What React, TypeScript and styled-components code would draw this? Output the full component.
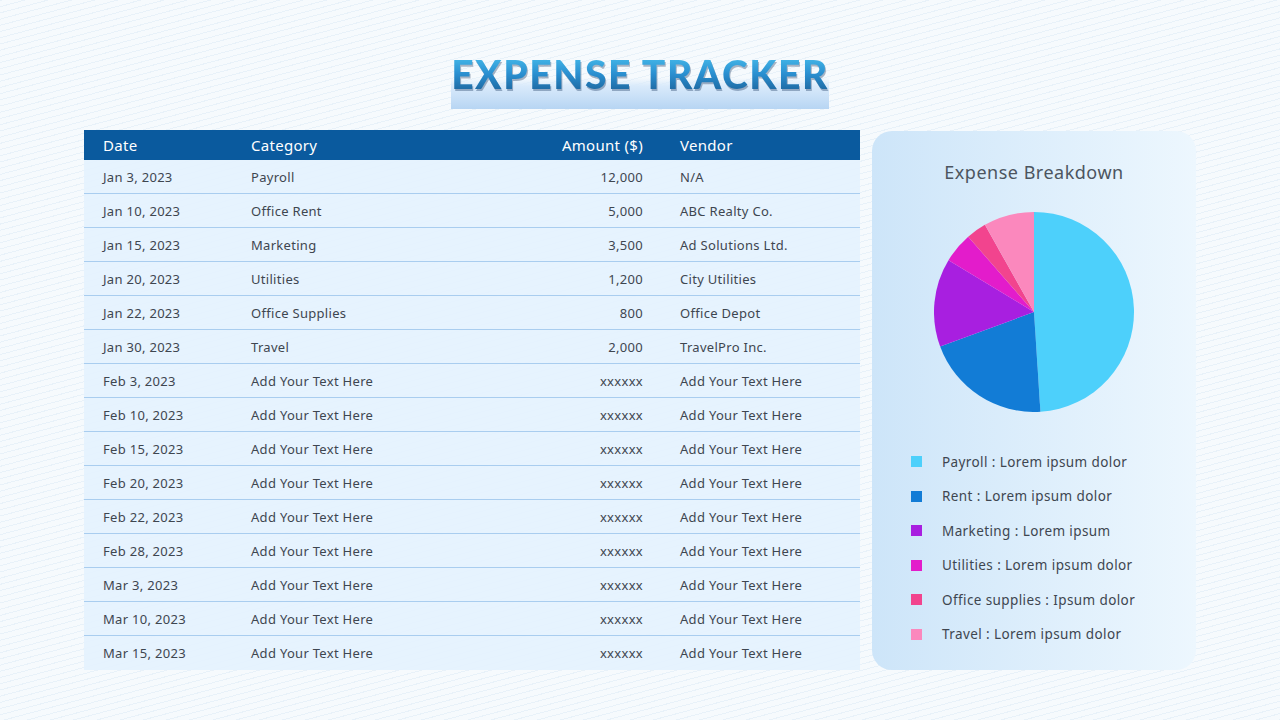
import React from "react";
import styled, { createGlobalStyle } from "styled-components";

const Global = createGlobalStyle`
  html, body { margin: 0; padding: 0; }
  body {
    width: 1280px; height: 720px; overflow: hidden;
    font-family: "Noto Sans", "Liberation Sans", sans-serif;
    background-color: #f6fafd;
    background-image: repeating-linear-gradient(165deg, rgba(200,222,240,0.3) 0 1px, transparent 1px 6px);
  }
`;

const Page = styled.div`
  width: 1280px; height: 720px; box-sizing: border-box;
  display: flex; flex-direction: column; align-items: center;
  padding-top: 52px;
`;

const TitleBox = styled.div`
  height: 57px; width: 378px; box-sizing: border-box;
  background: linear-gradient(180deg, transparent 0 45%, #d9eafb 60%, #b7d5f3 100%);
  display: flex; justify-content: center; align-items: flex-start;
`;

const Title = styled.h1`
  margin: 0; font-family: "Lato", "Liberation Sans", sans-serif; font-weight: 900;
  font-size: 39px; letter-spacing: 1.6px; line-height: 44px; white-space: nowrap;
  background: linear-gradient(180deg, #4cc3f0 0%, #2a8fd0 50%, #1a5d94 100%);
  -webkit-background-clip: text; background-clip: text; color: transparent;
  filter: drop-shadow(1px 2px 0 rgba(20,50,90,0.35));
`;

const Main = styled.div`
  margin-top: 21px; display: flex; gap: 12px; align-items: flex-start;
`;

const Table = styled.div`
  width: 776px; display: flex; flex-direction: column;
`;

const Row = styled.div<{ $head?: boolean }>`
  display: grid; grid-template-columns: 148px 220px 209px 1fr;
  height: ${p => (p.$head ? 30 : 34)}px; align-items: center;
  padding-left: 19px; box-sizing: border-box; white-space: nowrap;
  background: ${p => (p.$head ? "#0a5a9e" : "rgba(228,242,254,0.9)")};
  color: ${p => (p.$head ? "#fff" : "#3e4650")};
  font-size: ${p => (p.$head ? 15 : 13)}px;
  letter-spacing: 0.3px;
  border-bottom: ${p => (p.$head ? "none" : "1px solid #a9cdef")};
  &:last-child { border-bottom: none; }
`;

const Amt = styled.span`
  text-align: right; padding-right: 37px;
`;

const Card = styled.div`
  width: 324px; height: 539px; border-radius: 20px; margin-top: 1px;
  background: linear-gradient(90deg, #cde5f9, #edf7fe);
  display: flex; flex-direction: column; align-items: center; box-sizing: border-box;
  padding-top: 29px;
`;

const CardTitle = styled.div`
  font-size: 18px; color: #4c5560; letter-spacing: 0.5px;
`;

const PieSvg = styled.svg`
  margin-top: 28px;
`;

const Legend = styled.div`
  margin-top: 40px; align-self: flex-start; margin-left: 39px;
  display: flex; flex-direction: column; gap: 15.5px;
`;

const LegendItem = styled.div`
  display: flex; align-items: center; gap: 20px; font-size: 13.5px; color: #3e4650; height: 19px;
  letter-spacing: 0.4px;
`;

const Swatch = styled.span<{ $c: string }>`
  width: 11px; height: 11px; background: ${p => p.$c}; display: inline-block;
`;

const data = [
  ["Jan 3, 2023", "Payroll", "12,000", "N/A"],
  ["Jan 10, 2023", "Office Rent", "5,000", "ABC Realty Co."],
  ["Jan 15, 2023", "Marketing", "3,500", "Ad Solutions Ltd."],
  ["Jan 20, 2023", "Utilities", "1,200", "City Utilities"],
  ["Jan 22, 2023", "Office Supplies", "800", "Office Depot"],
  ["Jan 30, 2023", "Travel", "2,000", "TravelPro Inc."],
  ...["Feb 3, 2023", "Feb 10, 2023", "Feb 15, 2023", "Feb 20, 2023", "Feb 22, 2023", "Feb 28, 2023", "Mar 3, 2023", "Mar 10, 2023", "Mar 15, 2023"].map(d => [d, "Add Your Text Here", "xxxxxx", "Add Your Text Here"]),
];

const slices = [
  { v: 12000, c: "#4dd0fb", l: "Payroll : Lorem ipsum dolor" },
  { v: 5000, c: "#127cd6", l: "Rent : Lorem ipsum dolor" },
  { v: 3500, c: "#a81fe0", l: "Marketing : Lorem ipsum" },
  { v: 1200, c: "#e31ccb", l: "Utilities : Lorem ipsum dolor" },
  { v: 800, c: "#f2448e", l: "Office supplies : Ipsum dolor" },
  { v: 2000, c: "#fb88bd", l: "Travel : Lorem ipsum dolor" },
];

function Pie() {
  const total = slices.reduce((s, x) => s + x.v, 0);
  const r = 100, cx = 100, cy = 100;
  let a = 0;
  return (
    <PieSvg width="200" height="200" viewBox="0 0 200 200">
      {slices.map((s, i) => {
        const a0 = a, a1 = a + (s.v / total) * Math.PI * 2;
        a = a1;
        const x0 = cx + r * Math.sin(a0), y0 = cy - r * Math.cos(a0);
        const x1 = cx + r * Math.sin(a1), y1 = cy - r * Math.cos(a1);
        const large = a1 - a0 > Math.PI ? 1 : 0;
        return <path key={i} d={`M${cx},${cy} L${x0},${y0} A${r},${r} 0 ${large} 1 ${x1},${y1} Z`} fill={s.c} />;
      })}
    </PieSvg>
  );
}

export default function App() {
  return (
    <>
      <Global />
      <Page>
        <TitleBox><Title>EXPENSE TRACKER</Title></TitleBox>
        <Main>
          <Table>
            <Row $head><span>Date</span><span>Category</span><Amt>Amount ($)</Amt><span>Vendor</span></Row>
            {data.map((r, i) => (
              <Row key={i}><span>{r[0]}</span><span>{r[1]}</span><Amt>{r[2]}</Amt><span>{r[3]}</span></Row>
            ))}
          </Table>
          <Card>
            <CardTitle>Expense Breakdown</CardTitle>
            <Pie />
            <Legend>
              {slices.map(s => (
                <LegendItem key={s.l}><Swatch $c={s.c} />{s.l}</LegendItem>
              ))}
            </Legend>
          </Card>
        </Main>
      </Page>
    </>
  );
}
